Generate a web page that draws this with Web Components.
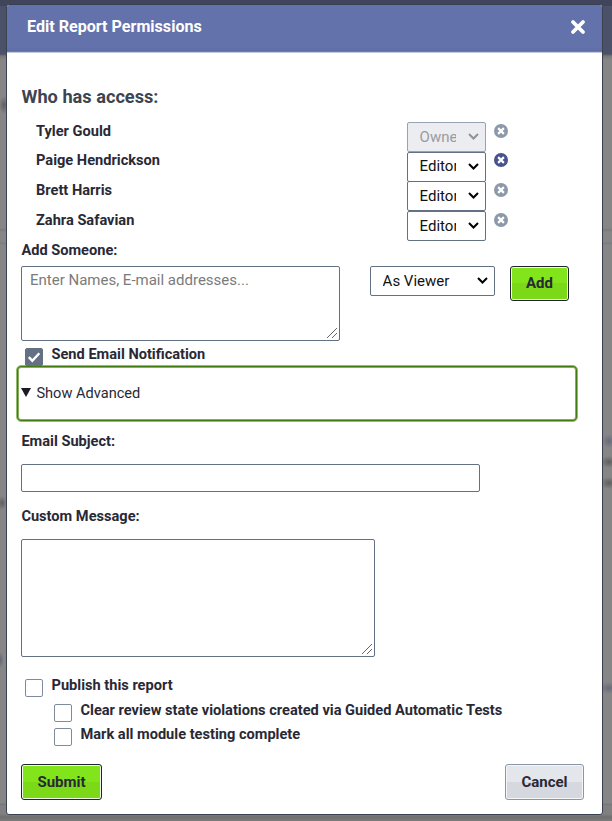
<!DOCTYPE html>
<html lang="en">
<head>
<meta charset="utf-8">
<title>Edit Report Permissions</title>
<style>
  html, body {
    margin: 0;
    height: 100%;
  }

  body {
    box-sizing: border-box;
    height: 821px;
    padding: 4px 9px 6px 6px;
    overflow: hidden;
    font: 14.6px/20px Roboto, "Liberation Sans", sans-serif;
    color: #292935;
    background:
      radial-gradient(ellipse 7px 7px at 609px 441px, #5f6579cc, transparent),
      radial-gradient(ellipse 9px 6px at 609px 462px, #555c, transparent),
      radial-gradient(ellipse 9px 6px at 609px 483px, #555c, transparent),
      radial-gradient(ellipse 10px 6px at 609px 688px, #5f6579cc, transparent),
      radial-gradient(ellipse 5px 9px at 4px 105px, #555c, transparent),
      radial-gradient(ellipse 5px 7px at 2px 503px, #555c, transparent),
      radial-gradient(ellipse 4px 8px at 0 660px, #555d70cc, transparent),
      linear-gradient(#40455b 0 6px, #4b5168 6px 54px, #777 56px, #868686 60px 228px, #7a7a7a 230px, #868686 232px 242px, #757b84 243px, #868686 245px 803px, #727880 804px, #808080 806px 814px, #6f6f6f 817px, #7c7c7c);
  }

  .pair {
    display: flex;
    align-items: flex-start;
  }
</style>
</head>
<body>

<modal-dialog heading="Edit Report Permissions">
  <h2 slot="title">Who has access:</h2>

  <access-row name="Tyler Gould" role="Owner" locked></access-row>
  <access-row name="Paige Hendrickson" role="Editor" active></access-row>
  <access-row name="Brett Harris" role="Editor"></access-row>
  <access-row name="Zahra Safavian" role="Editor"></access-row>

  <field-label style="margin-top: -0.4px">Add Someone:</field-label>
  <div class="pair" style="margin-top: 6px">
    <text-area style="width: 319px; height: 75px" hint="Enter Names, E-mail addresses..."></text-area>
    <role-select style="width: 125px; margin: 0 15px 0 30px" value="As Viewer"></role-select>
    <action-button style="width: 59px; height: 35px">Add</action-button>
  </div>

  <check-item style="margin-top: 3px" checked>Send Email Notification</check-item>
  <advanced-toggle>Show Advanced</advanced-toggle>

  <field-label style="margin-top: 9px">Email Subject:</field-label>
  <text-line style="margin-top: 13px; width: 459px"></text-line>

  <field-label style="margin-top: 14px">Custom Message:</field-label>
  <text-area style="margin-top: 13px; width: 354px; height: 118px"></text-area>

  <check-item style="margin-top: 18px">Publish this report</check-item>
  <check-item style="margin: 2.6px 0 0 29px">Clear review state violations created via Guided Automatic Tests</check-item>
  <check-item style="margin: 2.4px 0 0 29px">Mark all module testing complete</check-item>

  <action-button slot="footer" style="width: 81px">Submit</action-button>
  <action-button slot="footer" style="width: 79px" secondary>Cancel</action-button>
</modal-dialog>

<script>
class BaseElement extends HTMLElement {
  constructor() {
    super();
    this.attachShadow({ mode: 'open' });
  }

  connectedCallback() {
    this.shadowRoot.innerHTML = `<style>:host { display: block; box-sizing: border-box; } * { box-sizing: border-box; } ${this.constructor.styles}</style>${this.render()}`;
  }
}

class ModalDialog extends BaseElement {
  static get styles() {
    return /* css */`
    :host {
      display: flex;
      flex-direction: column;
      height: 811px;
      border: 1px solid #394150;
      border-radius: 3px;
      background: #fff;
      overflow: hidden;
    }

    header {
      display: flex;
      flex: none;
      justify-content: space-between;
      align-items: center;
      height: 48px;
      padding: 0 16px 4px 20px;
      border-bottom: 1px solid #c4c8dd;
      background: linear-gradient(#6472ac 0 42px, #5f6da7 46px, #7f8abb 47px);
      color: #fff;
    }

    h1 {
      margin: 0;
      font-size: 16.1px;
      font-weight: 700;
    }

    .body {
      padding: 32px 0 0 14px;
    }

    ::slotted(h2) {
      margin: 0 0 13px 0.5px;
      font-size: 18.2px;
      line-height: 24px;
      font-weight: 700;
      color: #3d4451;
    }

    footer {
      display: flex;
      justify-content: space-between;
      padding: 18px 18px 0 14px;
    }
    `;
  }

  render() {
    return /* html */`
    <header>
      <h1>${this.getAttribute('heading')}</h1>
      <svg width="16" height="16" viewBox="0 0 16 16" stroke="#fff" stroke-width="3.8" stroke-linecap="round"><path d="M3 3l10 10M13 3L3 13"/></svg>
    </header>
    <div class="body"><slot name="title"></slot><slot></slot></div>
    <footer><slot name="footer"></slot></footer>`;
  }
}

class AccessRow extends BaseElement {
  static get styles() {
    return /* css */`
    :host {
      display: flex;
      align-items: flex-start;
      height: 29.6px;
      padding-left: 15px;
      font-size: 14.6px;
      font-weight: 700;
    }

    .name {
      width: 371px;
      margin-top: -1.2px;
    }

    role-select {
      width: 79px;
    }

    svg {
      margin: 1.8px 0 0 8px;
      fill: #8c99a9;
    }

    :host([active]) svg {
      fill: #46538f;
    }
    `;
  }

  render() {
    return /* html */`
    <span class="name">${this.getAttribute('name')}</span>
    <role-select value="${this.getAttribute('role')}" ${this.hasAttribute('locked') ? 'disabled' : ''}></role-select>
    <svg width="14" height="14" viewBox="0 0 14 14"><circle cx="7" cy="7" r="7"/><path d="M4.9 4.9l4.2 4.2M9.1 4.9L4.9 9.1" stroke="#fff" stroke-width="2.2" stroke-linecap="square"/></svg>`;
  }
}

class RoleSelect extends BaseElement {
  static get styles() {
    return /* css */`
    :host {
      display: grid;
    }

    select {
      grid-area: 1 / 1;
      appearance: none;
      width: 100%;
      height: 30px;
      margin: 0;
      padding: 0 29px 0.4px 11.6px;
      border: 1px solid #647084;
      border-radius: 2px;
      background-color: #fff;
      font: 400 15px Roboto, sans-serif;
      color: #111;
    }

    svg {
      grid-area: 1 / 1;
      place-self: center end;
      margin: 0 7px 1px 0;
      fill: none;
      stroke: #000;
      stroke-width: 2;
      pointer-events: none;
    }

    select:disabled {
      border-color: #98a2b3;
      background-color: #ecedf1;
      color: #9b9b9f;
      opacity: 1;
    }

    select:disabled + svg {
      stroke: #919197;
    }
    `;
  }

  render() {
    return /* html */`
    <select ${this.hasAttribute('disabled') ? 'disabled' : ''}><option>${this.getAttribute('value')}</option></select>
    <svg width="11" height="7" viewBox="0 0 11 7"><path d="M1 1l4.5 4.5L10 1"/></svg>`;
  }
}

class FieldLabel extends BaseElement {
  static get styles() {
    return /* css */`:host { height: 20px; padding-left: 0.4px; font-size: 14.6px; font-weight: 700; }`;
  }

  render() {
    return `<slot></slot>`;
  }
}

class TextArea extends BaseElement {
  static get styles() {
    return /* css */`
    :host {
      display: grid;
    }

    textarea {
      grid-area: 1 / 1;
      width: 100%;
      height: 100%;
      margin: 0;
      padding: 4px 8px;
      border: 1px solid #647084;
      border-radius: 2px;
      font: 400 15px/18px Roboto, sans-serif;
      resize: none;
    }

    textarea::placeholder {
      color: #7b7b7b;
    }

    svg {
      grid-area: 1 / 1;
      place-self: end;
      margin: 0 3px 3px 0;
      stroke: #555;
      stroke-width: 0.9;
    }
    `;
  }

  render() {
    return /* html */`
    <textarea placeholder="${this.getAttribute('hint') || ''}"></textarea>
    <svg width="10" height="10" viewBox="0 0 10 10"><path d="M0 10L10 0M5 10l5-5"/></svg>`;
  }
}

class TextLine extends BaseElement {
  static get styles() {
    return /* css */`
    input {
      display: block;
      width: 100%;
      height: 28px;
      margin: 0;
      border: 1px solid #647084;
      border-radius: 2px;
    }
    `;
  }

  render() {
    return `<input type="text">`;
  }
}

class CheckItem extends BaseElement {
  static get styles() {
    return /* css */`
    :host {
      display: flex;
      height: 22px;
      padding-left: 4px;
      font-size: 14.6px;
      font-weight: 700;
    }

    .box {
      width: 18px;
      height: 18px;
      margin: 4px 8.5px 0 0;
      border: 1px solid #7f8b9c;
      border-radius: 2px;
    }

    :host([checked]) .box {
      border-color: #647084;
      background: #647084;
    }

    svg {
      display: none;
    }

    :host([checked]) svg {
      display: block;
    }
    `;
  }

  render() {
    return /* html */`
    <span class="box"><svg width="16" height="16" viewBox="0 0 16 16" fill="none" stroke="#fff" stroke-width="2.4"><path d="M2.8 8.2l3.5 3.5 7-7.4"/></svg></span>
    <span><slot></slot></span>`;
  }
}

class AdvancedToggle extends BaseElement {
  static get styles() {
    return /* css */`
    :host {
      display: flex;
      align-items: center;
      width: 562px;
      height: 57px;
      margin: -1px 0 0 -4.6px;
      padding: 0 0 1px 4px;
      border: 1px solid #94bb70;
      border-radius: 5px;
      box-shadow: inset 0 0 0 1px #427c10, inset 0 0 0 2px #86ae60;
    }

    svg {
      margin-right: 5px;
    }
    `;
  }

  render() {
    return /* html */`<svg width="10" height="9" viewBox="0 0 10 9" fill="#1b1b25"><path d="M0 0h10L5 9z"/></svg><slot></slot>`;
  }
}

class ActionButton extends BaseElement {
  static get styles() {
    return /* css */`
    :host {
      height: 36px;
    }

    button {
      width: 100%;
      height: 100%;
      padding: 0;
      border: 1px solid #1f2430;
      border-radius: 3px;
      box-shadow: inset 0 0 0 1px #f2fbe8;
      background: linear-gradient(#82e51c 50%, #7bd918 50%);
      font: 700 15px Roboto, sans-serif;
      color: #292935;
    }

    :host([secondary]) button {
      border-color: #8a96a8;
      box-shadow: inset 0 0 0 1px #f5f6f8;
      background: linear-gradient(#e3e6eb 50%, #d5d9df 50%);
    }
    `;
  }

  render() {
    return `<button type="button"><slot></slot></button>`;
  }
}

customElements.define('role-select', RoleSelect);
customElements.define('access-row', AccessRow);
customElements.define('field-label', FieldLabel);
customElements.define('text-area', TextArea);
customElements.define('text-line', TextLine);
customElements.define('check-item', CheckItem);
customElements.define('advanced-toggle', AdvancedToggle);
customElements.define('action-button', ActionButton);
customElements.define('modal-dialog', ModalDialog);
</script>
</body>
</html>
